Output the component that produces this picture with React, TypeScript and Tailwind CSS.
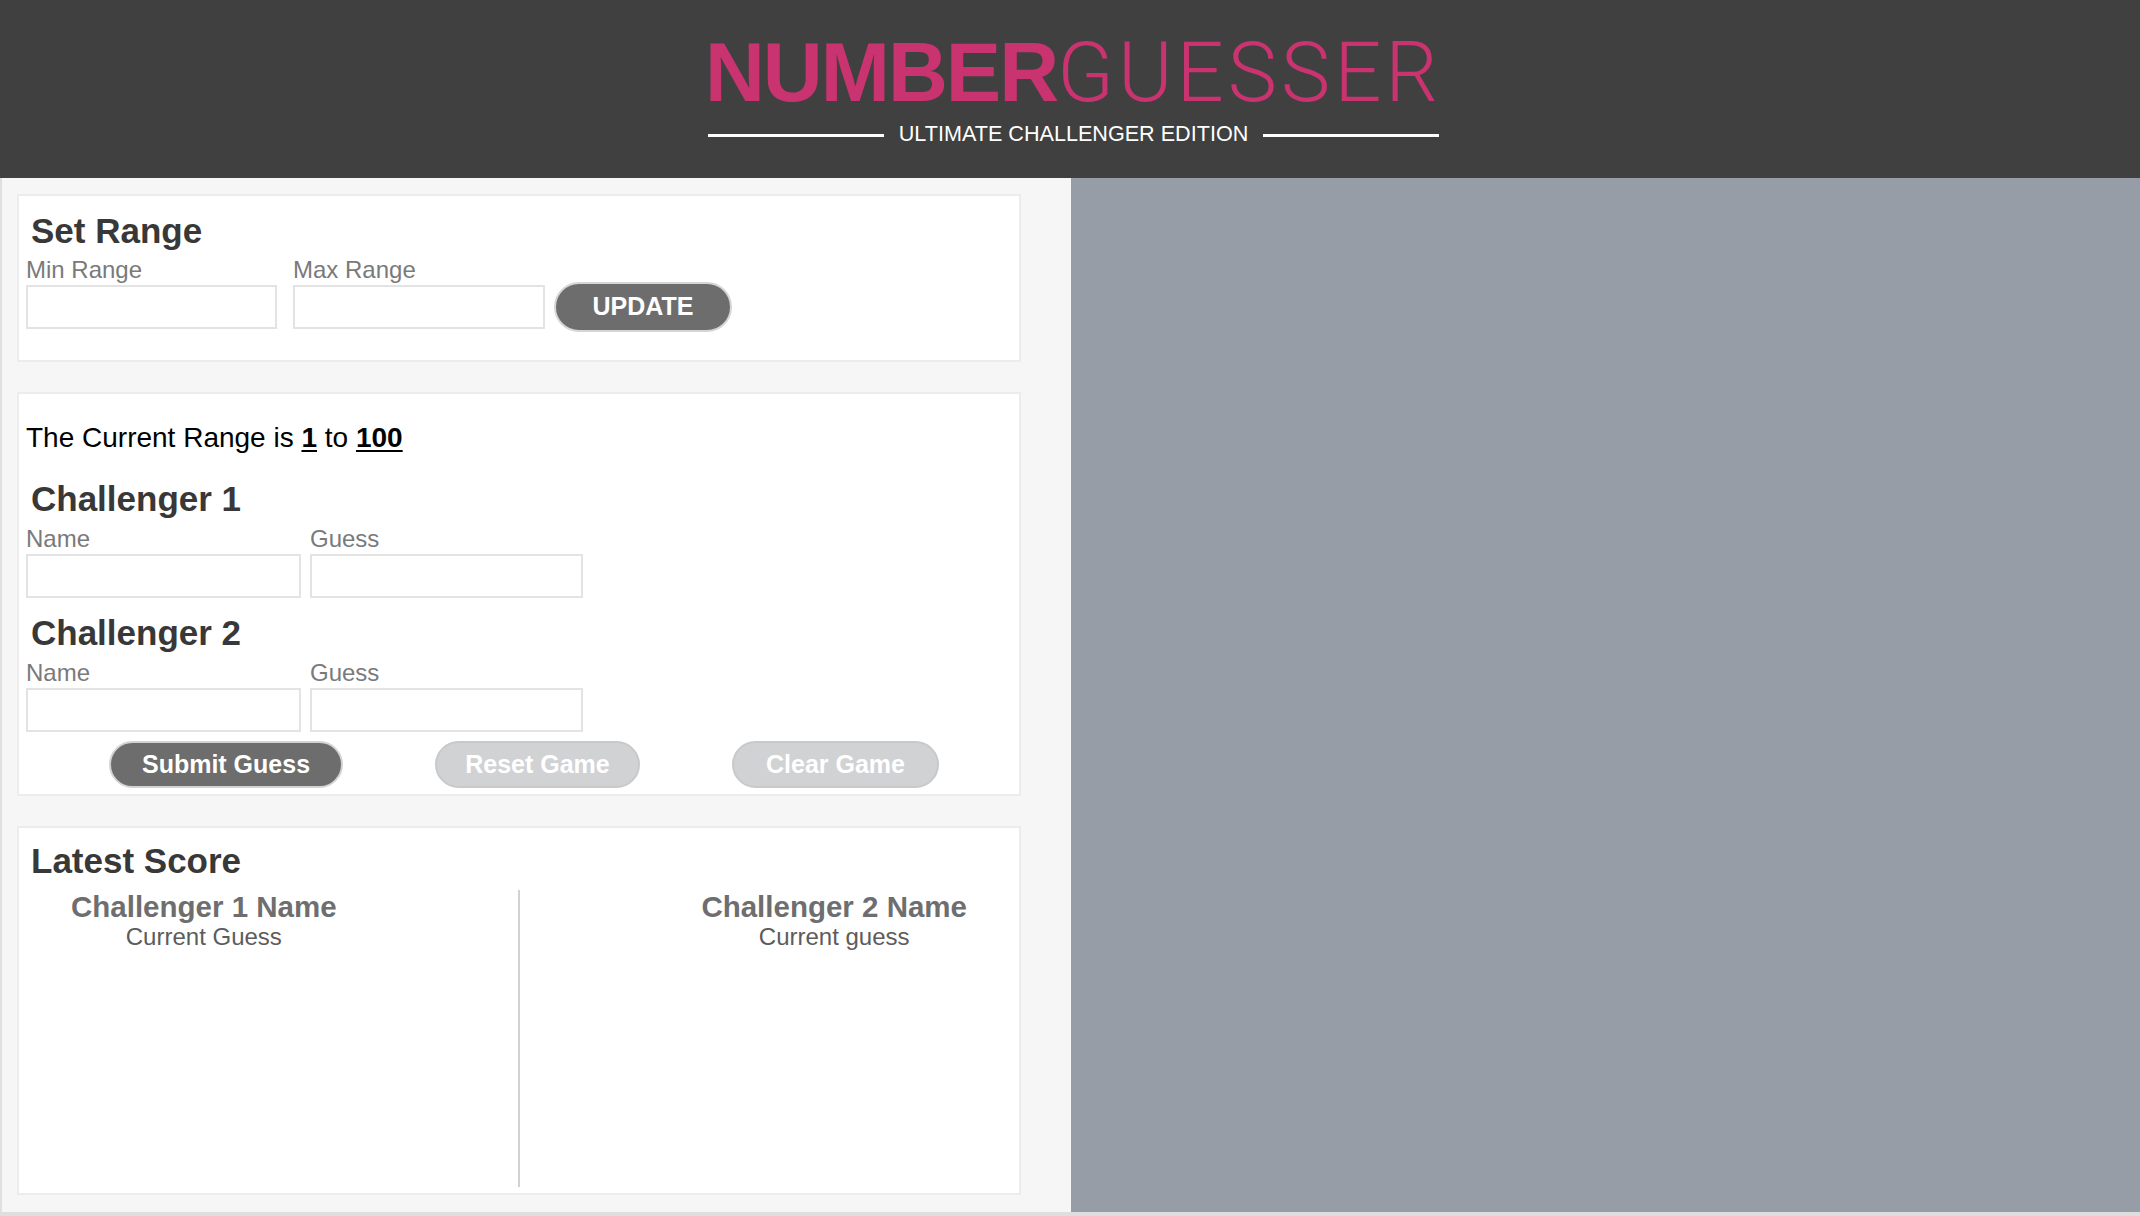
import React from "react";

const inputClass =
  "h-[44px] border-2 border-[#e3e3e3] bg-white px-2 text-[22px] text-[#333] outline-none";

const labelClass = "text-[24px] leading-[27px] text-[#7a7a7a]";

const headingClass =
  "ml-[5px] text-[35px] font-bold leading-[39px] text-[#383838]";

function Field({ label, width }: { label: string; width: string }) {
  return (
    <label className="flex flex-col">
      <span className={labelClass}>{label}</span>
      <input className={`${inputClass} mt-[2px] ${width}`} />
    </label>
  );
}

function Challenger({ title, first }: { title: string; first?: boolean }) {
  return (
    <div className={first ? "mt-[26px]" : "mt-[15px]"}>
      <h2 className={headingClass}>{title}</h2>
      <div className="mt-[7px] flex gap-[9px]">
        <Field label="Name" width="w-[275px]" />
        <Field label="Guess" width="w-[273px]" />
      </div>
    </div>
  );
}

function ScoreSide({ name, guess }: { name: string; guess: string }) {
  return (
    <div className="flex flex-col items-center">
      <span className="text-[29.5px] font-bold leading-[33px] text-[#6e6e6e]">
        {name}
      </span>
      <span className="text-[24px] leading-[27px] text-[#5c5c5c]">{guess}</span>
    </div>
  );
}

export default function App() {
  return (
    <div className="min-h-screen bg-[#dedede] font-['Liberation_Sans',Arial,sans-serif]">
      {/* title bar */}
      <header className="flex h-[178px] flex-col items-center bg-[#404040] pl-[7px] pt-[31px]">
        <h1 className="whitespace-nowrap text-[83px] leading-none text-[#c93370]">
          <span className="font-bold tracking-[-2px]">NUMBER</span>
          <span className="font-['Roboto',sans-serif] font-light tracking-[4px]">
            GUESSER
          </span>
        </h1>
        <div className="mt-[8px] flex items-center gap-[15px]">
          <span className="mt-[3px] h-[3px] w-[176px] bg-white" />
          <span className="text-[21.6px] leading-[24px] text-white">
            ULTIMATE CHALLENGER EDITION
          </span>
          <span className="mt-[3px] h-[3px] w-[176px] bg-white" />
        </div>
      </header>

      <main className="flex h-[1034px]">
        <section className="w-[1071px] border-l-2 border-[#e0e0e0] bg-[#f6f6f6] pl-[15px] pt-4">
          {/* range setup */}
          <div className="w-[1004px] border-2 border-[#ececec] bg-white pb-[31px] pl-[7px] pt-[15px]">
            <h2 className={headingClass}>Set Range</h2>
            <div className="mt-[6px] flex items-end">
              <Field label="Min Range" width="w-[251px]" />
              <div className="ml-[16px]">
                <Field label="Max Range" width="w-[252px]" />
              </div>
              <button className="mb-[-3px] ml-[9px] h-[50px] w-[178px] rounded-full border-2 border-[#d6d6d6] bg-[#6d6d6d] text-[25px] font-bold text-white">
                UPDATE
              </button>
            </div>
          </div>

          {/* guesses */}
          <div className="mt-[30px] w-[1004px] border-2 border-[#ececec] bg-white pb-[6px] pl-[7px] pt-[28px]">
            <p className="text-[28px] leading-[31px] text-black">
              The Current Range is{" "}
              <span className="font-bold underline decoration-2 underline-offset-[3px]">
                1
              </span>{" "}
              to{" "}
              <span className="font-bold underline decoration-2 underline-offset-[3px]">
                100
              </span>
            </p>
            <Challenger title="Challenger 1" first />
            <Challenger title="Challenger 2" />
            <div className="ml-[83px] mt-[9px] flex gap-[92px]">
              <button className="h-[47px] w-[234px] rounded-full border-2 border-[#d3d3d3] bg-[#6d6d6d] text-[25px] font-bold text-white">
                Submit Guess
              </button>
              <button className="h-[47px] w-[205px] rounded-full border-2 border-[#c8c9cb] bg-[#d1d2d4] text-[25px] font-bold text-white">
                Reset Game
              </button>
              <button className="h-[47px] w-[207px] rounded-full border-2 border-[#c8c9cb] bg-[#d1d2d4] text-[25px] font-bold text-white">
                Clear Game
              </button>
            </div>
          </div>

          {/* scoreboard */}
          <div className="mt-[30px] w-[1004px] border-2 border-[#ececec] bg-white pb-[6px] pt-[13px]">
            <h2 className="ml-[12px] text-[35px] font-bold leading-[39px] text-[#383838]">
              Latest Score
            </h2>
            <div className="mt-[10px] flex h-[297px] justify-between px-[52px]">
              <ScoreSide name="Challenger 1 Name" guess="Current Guess" />
              <div className="w-[2px] bg-[#d2d2d2]" />
              <ScoreSide name="Challenger 2 Name" guess="Current guess" />
            </div>
          </div>
        </section>
        <aside className="flex-1 bg-[#969da6]" />
      </main>
    </div>
  );
}
